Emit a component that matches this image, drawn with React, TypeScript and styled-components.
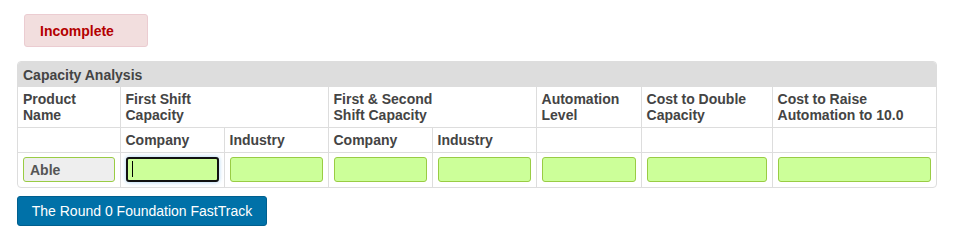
import styled, { createGlobalStyle } from "styled-components";

const GlobalStyle = createGlobalStyle`
  body {
    margin: 0;
    font-family: "Liberation Sans", Arial, sans-serif;
    font-size: 14px;
    color: #444;
    background: #fff;
  }
`;

const Page = styled.div`
  padding: 14px 31px 0 17px;
  display: flex;
  flex-direction: column;
  align-items: flex-start;
`;

const Status = styled.div`
  margin-left: 7px;
  width: 124px;
  height: 33px;
  box-sizing: border-box;
  padding: 0 0 0 15px;
  display: flex;
  align-items: center;
  background: #f2dede;
  border: 1px solid #ebccd1;
  border-radius: 3px;
  color: #b40000;
  font-weight: bold;
  font-size: 14px;
`;

const Panel = styled.div`
  margin-top: 14px;
  width: 918px;
  border: 1px solid #ddd;
  border-radius: 4px;
  overflow: hidden;
`;

const PanelTitle = styled.div`
  background: #ddd;
  height: 25px;
  padding: 0 5px;
  display: flex;
  align-items: center;
  font-weight: bold;
  font-size: 14px;
  color: #444;
`;

const Table = styled.table`
  width: 100%;
  border-collapse: collapse;
  table-layout: fixed;
`;

const Th = styled.th`
  text-align: left;
  vertical-align: top;
  font-weight: bold;
  font-size: 14px;
  line-height: 16px;
  color: #444;
  padding: 4px 5px 4px;
  border-right: 1px solid #ddd;
  border-bottom: 1px solid #ddd;
  &:last-child {
    border-right: none;
  }
`;

const HeadCell = styled(Th)`
  height: 40px;
  box-sizing: border-box;
`;

const SubCell = styled(Th)`
  height: 25px;
  box-sizing: border-box;
  padding-top: 4px;
`;

const Td = styled.td`
  padding: 4px 5px 4px 5px;
  border-right: 1px solid #ddd;
  height: 34px;
  box-sizing: border-box;
  &:last-child {
    border-right: none;
  }
`;

const Field = styled.input<{ $focus?: boolean; $readOnly?: boolean }>`
  display: block;
  width: 100%;
  height: 25px;
  box-sizing: border-box;
  border-radius: 3px;
  font-family: "Liberation Sans", Arial, sans-serif;
  font-size: 14px;
  outline: none;
  background: ${({ $readOnly }) => ($readOnly ? "#eee" : "#ccff99")};
  color: #555;
  font-weight: bold;
  border: ${({ $focus }) => ($focus ? "2px solid #111" : "1px solid #99cc44")};
  box-shadow: ${({ $focus }) => ($focus ? "0 0 4px rgba(102,175,233,0.6)" : "none")};
  padding: 0 0 0 ${({ $focus }) => ($focus ? "5px" : "6px")};
`;

const Button = styled.button`
  margin-top: 8px;
  width: 250px;
  height: 30px;
  background: #0071a8;
  border: 1px solid #005f8e;
  border-radius: 3px;
  color: #fff;
  font-family: "Liberation Sans", Arial, sans-serif;
  font-size: 14px;
  padding: 0;
`;

const Caret = styled.span`
  display: inline-block;
  width: 1px;
  height: 16px;
  background: #000;
`;

const FocusWrap = styled.div`
  position: relative;
  & > span {
    position: absolute;
    left: 6px;
    top: 4px;
  }
`;

const widths = [102, 104, 104, 104, 104, 105, 131, 164];

export default function App() {
  return (
    <>
      <GlobalStyle />
      <Page>
        <Status>Incomplete</Status>
        <Panel>
          <PanelTitle>Capacity Analysis</PanelTitle>
          <Table>
            <colgroup>
              {widths.map((w, i) => (
                <col key={i} style={{ width: w }} />
              ))}
            </colgroup>
            <thead>
              <tr>
                <HeadCell>
                  Product
                  <br />
                  Name
                </HeadCell>
                <HeadCell colSpan={2}>
                  First Shift
                  <br />
                  Capacity
                </HeadCell>
                <HeadCell colSpan={2}>
                  First &amp; Second
                  <br />
                  Shift Capacity
                </HeadCell>
                <HeadCell>
                  Automation
                  <br />
                  Level
                </HeadCell>
                <HeadCell>
                  Cost to Double
                  <br />
                  Capacity
                </HeadCell>
                <HeadCell>
                  Cost to Raise
                  <br />
                  Automation to 10.0
                </HeadCell>
              </tr>
              <tr>
                <SubCell></SubCell>
                <SubCell>Company</SubCell>
                <SubCell>Industry</SubCell>
                <SubCell>Company</SubCell>
                <SubCell>Industry</SubCell>
                <SubCell></SubCell>
                <SubCell></SubCell>
                <SubCell></SubCell>
              </tr>
            </thead>
            <tbody>
              <tr>
                <Td>
                  <Field $readOnly readOnly value="Able" />
                </Td>
                <Td>
                  <FocusWrap>
                    <Field $focus readOnly value="" />
                    <Caret />
                  </FocusWrap>
                </Td>
                {widths.slice(2).map((_, i) => (
                  <Td key={i}>
                    <Field readOnly value="" />
                  </Td>
                ))}
              </tr>
            </tbody>
          </Table>
        </Panel>
        <Button>The Round 0 Foundation FastTrack</Button>
      </Page>
    </>
  );
}
